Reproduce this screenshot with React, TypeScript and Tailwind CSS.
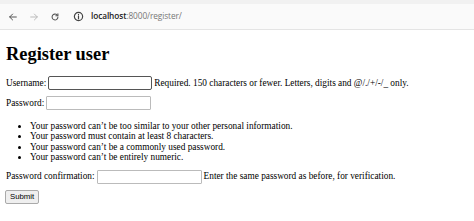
import React from "react";

const serif = { fontFamily: '"Liberation Serif", "Times New Roman", serif' };

function Back() {
  return (
    <svg width="10" height="10" viewBox="0 0 24 24" fill="none" stroke="#555" strokeWidth="2.4" strokeLinecap="round" strokeLinejoin="round">
      <path d="M20 12H4M11 5l-7 7 7 7" />
    </svg>
  );
}
function Fwd() {
  return (
    <svg width="10" height="10" viewBox="0 0 24 24" fill="none" stroke="#bbb" strokeWidth="2.4" strokeLinecap="round" strokeLinejoin="round">
      <path d="M4 12h16M13 5l7 7-7 7" />
    </svg>
  );
}
function Reload() {
  return (
    <svg width="10" height="10" viewBox="0 0 24 24" fill="none" stroke="#555" strokeWidth="2.6" strokeLinecap="round" strokeLinejoin="round">
      <path d="M19 12a7 7 0 1 1-2.05-4.95" />
      <path d="M19 4v5h-5" />
    </svg>
  );
}
function Info() {
  return (
    <svg width="11" height="11" viewBox="0 0 24 24" fill="none" stroke="#444" strokeWidth="2.6" strokeLinecap="round">
      <circle cx="12" cy="12" r="9" />
      <path d="M12 11v6M12 7.5v.5" />
    </svg>
  );
}

export default function App() {
  return (
    <div className="w-[474px] h-[221px] bg-white overflow-hidden">
      <div className="h-[4px] bg-[#f1f1f1]" />
      <div className="h-[26px] bg-[#fafafa] border-b border-[#e4e4e4] flex items-center" style={{ fontFamily: '"Open Sans", "Noto Sans", sans-serif' }}>
        <div className="w-[26px] flex justify-center"><Back /></div>
        <div className="w-[16px] flex justify-center"><Fwd /></div>
        <div className="w-[26px] flex justify-center"><Reload /></div>
        <div className="ml-[5px] flex items-center gap-[7px]">
          <Info />
          <span className="text-[8.3px] tracking-[-0.1px]">
            <span className="text-[#222] font-semibold">localhost</span>
            <span className="text-[#777]">:8000/register/</span>
          </span>
        </div>
      </div>
      <div className="px-[6px] text-black text-[9.3px] leading-[10.4px]" style={serif}>
        <h1 className="text-[18.4px] leading-[22px] font-bold mt-[13px] mb-[11px]">Register user</h1>
        <form>
          <p className="flex items-center mb-[6px]">
            <label className="mr-[2px]">Username:</label>
            <input type="text" className="w-[104px] h-[14px] border-[1.5px] border-[#555] rounded-[2px] bg-white outline-none" />
            <span className="ml-[2px]">Required. 150 characters or fewer. Letters, digits and @/./+/-/_ only.</span>
          </p>
          <p className="flex items-center">
            <label className="mr-[2px]">Password:</label>
            <input type="password" className="w-[105px] h-[14px] border border-[#bbb] rounded-[1px] bg-white" />
          </p>
          <ul className="list-disc pl-[24px] mt-[11px] mb-[7px] leading-[10.4px]">
            <li>Your password can’t be too similar to your other personal information.</li>
            <li>Your password must contain at least 8 characters.</li>
            <li>Your password can’t be a commonly used password.</li>
            <li>Your password can’t be entirely numeric.</li>
          </ul>
          <p className="flex items-center mb-[6px]">
            <label className="mr-[2px]">Password confirmation:</label>
            <input type="password" className="w-[105px] h-[14px] border border-[#bbb] rounded-[1px] bg-white" />
            <span className="ml-[2px]">Enter the same password as before, for verification.</span>
          </p>
          <button type="button" className="ml-[-1px] h-[14px] px-[4px] border border-[#aaa] bg-[#efefef] rounded-[2px] text-[7.8px] leading-[12px] text-black" style={{ fontFamily: '"Liberation Sans", Arial, sans-serif' }}>Submit</button>
        </form>
      </div>
    </div>
  );
}
